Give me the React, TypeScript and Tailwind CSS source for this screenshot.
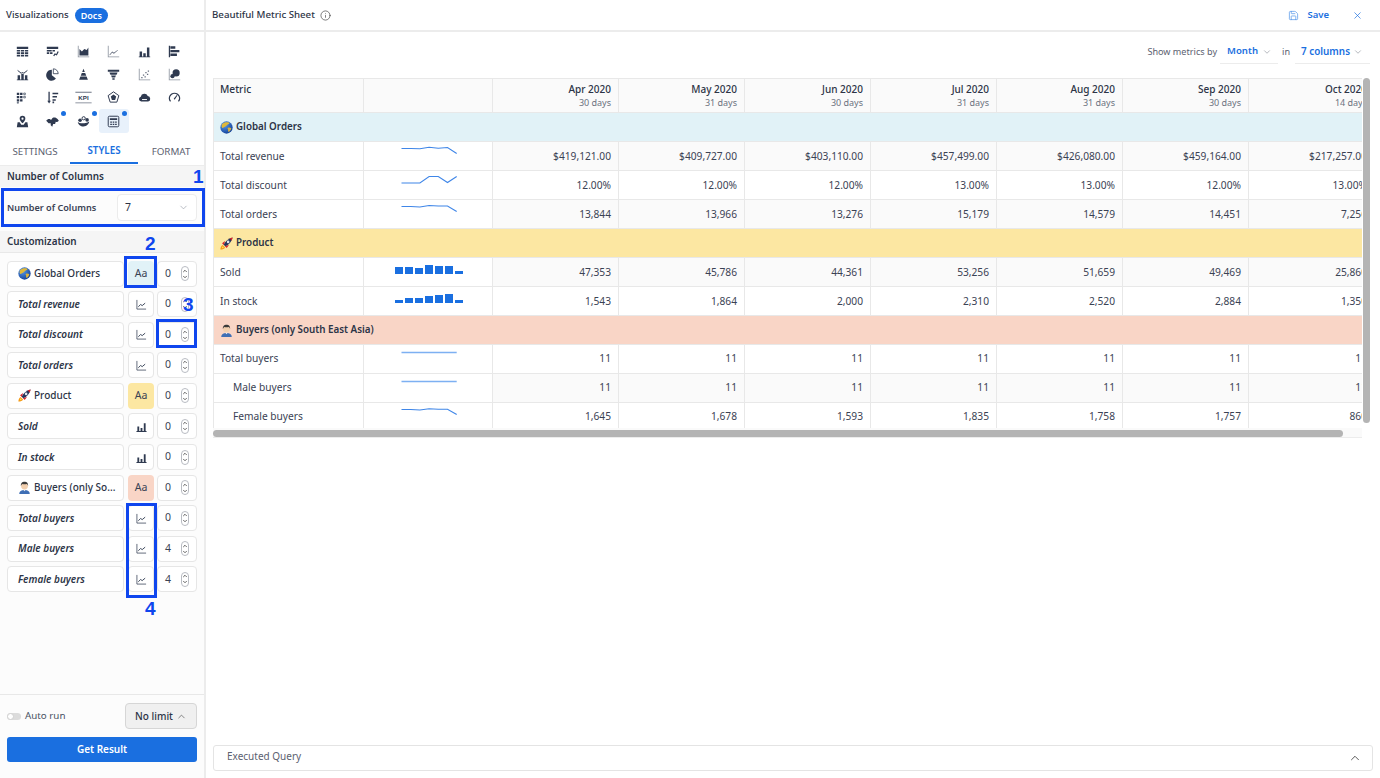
import React from "react";
import { ChevronDown, ChevronUp, X, Info, Save } from "lucide-react";

const INK = "#2f3a50";

function Globe({ s = 13 }: { s?: number }) {
  return (
    <svg width={s} height={s} viewBox="0 0 16 16" className="shrink-0">
      <defs>
        <radialGradient id="gl" cx="35%" cy="30%" r="80%">
          <stop offset="0" stopColor="#5a9be8" />
          <stop offset="1" stopColor="#0d3a94" />
        </radialGradient>
      </defs>
      <circle cx="8" cy="8" r="7.6" fill="url(#gl)" />
      <path d="M3 3.5c2-2 5-2.6 8-1.6 1 1 .4 2-1 2.2-1 .2-1 1.4-2.2 1.6-1.2.2-1 1.6-2.4 1.6-1 0-1 1.6-2.6 1.2C1.6 7.6 1.8 5 3 3.5z" fill="#e0b83a" />
      <path d="M9.5 8.5c1.4-.6 3.4-.4 4.4.3-.4 2.2-1.8 4-3.4 4.6-1-1-.2-2.2-.6-3-.3-.7-.8-1.4-.4-1.9z" fill="#d9b23c" />
    </svg>
  );
}

function Rocket({ s = 13 }: { s?: number }) {
  return (
    <svg width={s} height={s} viewBox="0 0 16 16" className="shrink-0">
      <path d="M.5 15.500c.1-2.800 1-4.800 2.700-5.700l3 3c-.9 1.700-2.900 2.600-5.700 2.700z" fill="#f59a14" />
      <path d="M2.300 13.700c.1-1.100.5-1.900 1.200-2.400l1.200 1.200c-.5.7-1.300 1.100-2.400 1.200z" fill="#fde25c" />
      <path d="M2.500 7.800 6.200 5 5 10z" fill="#d8232a" />
      <path d="M8.200 13.500 11 9.800 6 11z" fill="#d8232a" />
      <path d="M4.600 9.600C6.600 5 10 1.800 15.500.5c-1.300 5.500-4.500 8.900-9.100 10.900z" fill="#26345c" />
      <path d="M11.500 1.700c1.200.4 2.200 1.400 2.800 2.800.5-1.200.9-2.600 1.200-4-1.400.3-2.800.7-4 1.200z" fill="#d8232a" />
      <circle cx="10" cy="6" r="1.600" fill="#dfe6ee" />
    </svg>
  );
}

function Person({ s = 13 }: { s?: number }) {
  return (
    <svg width={s} height={s} viewBox="0 0 16 16" className="shrink-0">
      <path d="M1.500 16c0-3.400 2.400-5 6.500-5s6.500 1.600 6.500 5z" fill="#3f6fb5" />
      <path d="M6.400 10.600 8 12.600l1.600-2z" fill="#f3f4f6" />
      <circle cx="8" cy="6.200" r="4.200" fill="#f2cfae" />
      <path d="M3.600 6.200C3 2.600 5.400.8 8 .8s5 1.800 4.400 5.400c-.3-1.400-.9-2.200-1.600-2.600-1.600.6-3.600.6-5.400.2-.9.4-1.500 1.200-1.800 2.400z" fill="#3a3a3a" />
    </svg>
  );
}

const G = ({ children }: { children: React.ReactNode }) => (
  <svg width="13" height="13" viewBox="0 0 16 16" fill={INK}>
    {children}
  </svg>
);

const vizIcons: React.ReactNode[] = [
  <G key="a"><path d="M1 2h14v3H1zM1 6h4v2H1zM6 6h4v2H6zM11 6h4v2h-4zM1 9h4v2H1zM6 9h4v2H6zM11 9h4v2h-4zM1 12h4v2H1zM6 12h4v2H6zM11 12h4v2h-4z" /></G>,
  <G key="b"><path d="M1 2h14v3H1zM1 6h6v2H1zM8 6h3v2H8zM1 9h3v2H1zM5 9h3v2H5z" /><path d="M9.500 13.500 11 11l2 1 2-4" fill="none" stroke={INK} strokeWidth="1.500" /></G>,
  <G key="c"><path d="M1 1h1v13h13v1H1z" opacity=".55" /><path d="M3 13V5l3 3 3-3 3 1 2-3v10z" /></G>,
  <G key="d"><path d="M1 1h1v13h13v1H1z" opacity=".55" /><path d="M3.500 12.500 3 12l3.500-4 2 1.500L13 6l.5.6-5 4.200-2-1.500z" opacity=".85" /></G>,
  <G key="e"><path d="M2 8h3v6H2zM6.500 10h3v4h-3zM11 3h3v11h-3zM1 14.200h14v1H1z" /></G>,
  <G key="f"><path d="M1 1h1.600v14H1zM3 1.500h6v3H3zM3 6h11v3H3zM3 10.500h8v3H3z" /></G>,
  <G key="g"><path d="M2 9h3v5H2zM6.500 7h3v7h-3zM11 9h3v5h-3zM1 14.200h14v1H1z" /><path d="M2 3l4.500 3.500L8 5l1.500 1.500L14 3" fill="none" stroke={INK} strokeWidth="1.200" /></G>,
  <G key="h"><path d="M7.200 2.200v6.600l5 4.200A6.700 6.700 0 1 1 7.200 2.200z" /><path d="M9 1a6 6 0 0 1 6 6H9z" fill="none" stroke={INK} /></G>,
  <G key="i"><path d="M8 1 9.600 5H6.400zM5.900 6h4.200l1.300 3.400H4.600zM4.200 10.400h7.600l1.600 4.200H2.600z" /></G>,
  <G key="j"><path d="M1 2h14v2.600H1zM3 5.600h10l-1.200 2.600H4.200zM5 9.200h6l-1 2.400H6zM6.600 12.600h2.800v2H6.600z" /></G>,
  <G key="k"><path d="M1 1h1v13h13v1H1z" opacity=".55" /><path d="M4 11h1.600v1.600H4zM6 8h1.600v1.600H6zM8 10h1.600v1.600H8zM9 5h1.600v1.600H9zM11 7h1.600v1.600H11zM12 3h1.600v1.600H12z" opacity=".75" /></G>,
  <G key="l"><path d="M1 1h1v13h13v1H1z" opacity=".55" /><circle cx="10" cy="6" r="4.400" /><circle cx="5.500" cy="10" r="2.600" /></G>,
  <G key="m"><path d="M1 2h3v3H1zM5 2h3v3H5zM1 6h3v3H1zM5 6h3v3H5zM1 10h3v3H1zM5 10h3v3H5z" /><path d="M9.500 2.500h2v2h-2zM9.500 6.500h2v2h-2zM1.500 14h1.500v1H1.500z" fill="none" stroke={INK} strokeWidth=".8" /></G>,
  <G key="n"><path d="M3 1h1.600v11H6l-2.200 3.400L1.600 12H3zM8 2h7v2H8zM8 6h5.500v2H8zM8 10h4v2H8zM8 13h2v2H8z" /></G>,
  <svg key="o" width="19" height="13" viewBox="0 0 22 16" fill={INK}><path d="M1 1h20v1H1zM1 14h20v1H1z" opacity=".7" /><text x="11" y="11.500" fontSize="7.600" fontWeight="700" textAnchor="middle" fontFamily="'Liberation Sans',sans-serif">KPI</text></svg>,
  <G key="p"><path d="M8 1l6.600 4.700-2.500 8H3.900l-2.500-8z" fill="none" stroke={INK} strokeWidth="1.200" /><path d="M8 4.400l3.300 2.400-1.300 4.200H6l-1.300-4.200z" /></G>,
  <G key="q"><path d="M4 13a3 3 0 0 1-.6-5.900A4.500 4.500 0 0 1 12 6.300 3.400 3.400 0 0 1 12.400 13z" /><path d="M5 10.500h6" stroke="#fff" strokeWidth="1.200" /></G>,
  <G key="r"><path d="M8 2a7 7 0 0 0-5.500 11.300l1.200-1A5.400 5.400 0 1 1 12.300 12.300l1.200 1A7 7 0 0 0 8 2z" /><path d="M7.200 9.200 10.800 5l.8.600-3 4.600a1 1 0 0 1-1.400-1z" /></G>,
  <G key="s"><path fillRule="evenodd" d="M8 1a3.500 3.500 0 0 1 3.500 3.500C11.500 6.400 9.200 9 8 10.200 6.800 9 4.500 6.400 4.500 4.500A3.500 3.500 0 0 1 8 1zm0 2.200a1.300 1.300 0 1 0 0 2.600 1.300 1.300 0 0 0 0-2.600z" /><path d="M2 9h2.500l2 3h3l2-3H14l1 6H1z" /></G>,
  <G key="t"><path d="M.3 7c1-1.600 2.800-2.300 4.500-2l1.400 1.200L8 3.600c2.400-1 4.800-.3 6.200 1.400L15.800 7c-1 1.200-2.600 1.700-3.800 1.400L11.200 11H8.800l-1.100 3.400-1.900-1.800V10H3.200z" /></G>,
  <G key="u"><circle cx="3.800" cy="6.500" r="2.200" /><circle cx="8.200" cy="4" r="2" fill="none" stroke={INK} strokeWidth="1.200" /><circle cx="12.400" cy="6" r="2.200" /><path d="M1 8.500c1.400 1 2.600 1.600 4 1.600h4c1.800 0 4-.6 6-2-.2 3-3 5.900-7 5.900-3.600 0-6.600-2.300-7-5.500z" /></G>,
  <G key="v"><rect x="1.500" y="1.500" width="13" height="13" rx="1.600" fill="none" stroke={INK} strokeWidth="1.200" /><path d="M3.500 4h9v2h-9zM4 8h2v1.500H4zM7 8h2v1.500H7zM10 8h2v1.500h-2zM4 10.700h2v1.500H4zM7 10.700h2v1.500H7zM10 10.700h2v1.500h-2z" /></G>,
];

const LineIcon = () => (
  <svg width="11" height="11" viewBox="0 0 12 12" fill="none" stroke={INK} strokeWidth="1">
    <path d="M1 1v10h10" opacity=".8" />
    <path d="M2.500 8.500 5 6l1.800 1.200L10 4.500" />
  </svg>
);

const BarIcon = () => (
  <svg width="11" height="11" viewBox="0 0 12 12" fill={INK}>
    <path d="M1.500 6h2v5h-2zM5 7.500h2V11H5zM8.500 2.500h2V11h-2zM.500 11h11v.900H.500z" />
  </svg>
);

const Stepper = () => (
  <span className="flex h-[15px] w-[8px] flex-col items-center justify-center rounded-full border border-[#b9bcc3] bg-white">
    <ChevronUp size={6} strokeWidth={3} color="#333" />
    <ChevronDown size={6} strokeWidth={3} color="#333" />
  </span>
);

type SideRow = { label: string; kind: "group" | "line" | "bar"; v: string; icon?: React.ReactNode; color?: string };

const sideRows: SideRow[] = [
  { label: "Global Orders", kind: "group", v: "0", icon: <Globe />, color: "bg-[#e1f2f7]" },
  { label: "Total revenue", kind: "line", v: "0" },
  { label: "Total discount", kind: "line", v: "0" },
  { label: "Total orders", kind: "line", v: "0" },
  { label: "Product", kind: "group", v: "0", icon: <Rocket />, color: "bg-[#fce7a2]" },
  { label: "Sold", kind: "bar", v: "0" },
  { label: "In stock", kind: "bar", v: "0" },
  { label: "Buyers (only So...", kind: "group", v: "0", icon: <Person />, color: "bg-[#f9d5c6]" },
  { label: "Total buyers", kind: "line", v: "0" },
  { label: "Male buyers", kind: "line", v: "4" },
  { label: "Female buyers", kind: "line", v: "4" },
];

function Sidebar() {
  return (
    <aside className="flex h-full w-[206px] shrink-0 flex-col border-r-2 border-[#ececec] bg-[#fcfcfc]">
      <div className="flex h-[32px] shrink-0 items-center gap-[6px] border-b-2 border-[#ececec] bg-white pl-[6px] pt-[1px]">
        <span className="text-[9.600px] font-medium text-[#2c3446]">Visualizations</span>
        <span className="flex h-[15px] items-center rounded-full bg-[#1a6fe0] px-[6px] text-[9px] font-semibold text-white">Docs</span>
      </div>
      <div className="grid h-[109px] shrink-0 grid-cols-[repeat(6,30.500px)] grid-rows-[repeat(4,23.300px)] content-start bg-white pl-[7px] pt-[7.500px]">
        {vizIcons.map((ic, i) => (
          <div key={i} className={`relative flex items-center justify-center rounded-[3px] ${i === 21 ? "bg-[#e8f1fb]" : ""}`}>
            {ic}
            {i >= 19 && <span className="absolute right-[2px] top-[2px] h-[5px] w-[5px] rounded-full bg-[#1a6fe0]" />}
          </div>
        ))}
      </div>
      <div className="flex h-[24px] shrink-0 bg-white pb-[1px] text-[9.800px] text-[#5b6170]">
        <div className="flex w-[70px] items-center justify-center">SETTINGS</div>
        <div className="flex w-[68px] items-center justify-center border-b-2 border-[#1a6fe0] font-semibold text-[#1a6fe0]">STYLES</div>
        <div className="flex w-[66px] items-center justify-center">FORMAT</div>
      </div>
      <div className="flex h-[22px] shrink-0 items-center border-t border-[#ececec] bg-[#f5f5f5] pl-[7px] text-[9.900px] font-semibold text-[#2c3446]">Number of Columns</div>
      <div className="flex h-[41px] shrink-0 items-center justify-between pl-[7px] pr-[7px]">
        <span className="pt-[1px] text-[9.100px] font-semibold text-[#3a4254]">Number of Columns</span>
        <div className="flex h-[27px] w-[80px] items-center justify-between rounded-[4px] border border-[#ececec] bg-white pl-[7px] pr-[7px] text-[10.500px] text-[#2c3446]">
          7
          <ChevronDown size={11} color="#9aa0aa" strokeWidth={1.500} />
        </div>
      </div>
      <div className="mt-[3px] flex h-[22px] shrink-0 items-center border-b border-[#e8e8e8] bg-[#f5f5f5] pl-[7px] text-[9.900px] font-semibold text-[#2c3446]">Customization</div>
      <div className="flex flex-col gap-[4.600px] pl-[7px] pr-[7px] pt-[7.500px]">
        {sideRows.map((r) => (
          <div key={r.label} className="flex h-[26px] items-center">
            <div className={`flex h-full w-[117px] items-center overflow-hidden rounded-[4px] border border-[#e6e6e6] bg-white pl-[10px] ${r.kind === "group" ? "gap-[3px] text-[10px] font-medium text-[#2c3446]" : "text-[10px] font-semibold italic text-[#2c3446]"}`}>
              {r.icon}
              <span className="whitespace-nowrap">{r.label}</span>
            </div>
            <div className={`ml-[4px] flex h-full w-[26px] items-center justify-center rounded-[4px] ${r.kind === "group" ? r.color : "border border-[#e6e6e6] bg-white"}`}>
              {r.kind === "group" ? <span className="text-[10.500px] text-[#3a4254]">Aa</span> : r.kind === "bar" ? <BarIcon /> : <LineIcon />}
            </div>
            <div className="ml-[3px] flex h-full w-[40px] items-center justify-between rounded-[4px] border border-[#e6e6e6] bg-white pl-[7px] pr-[7px] text-[10.500px] text-[#3a4254]">
              {r.v}
              <Stepper />
            </div>
          </div>
        ))}
      </div>
      <div className="flex-1" />
      <div className="flex h-[84px] shrink-0 flex-col border-t border-[#e8e8e8] px-[7px] pt-[8px]">
        <div className="flex h-[26px] items-center justify-between">
          <div className="flex items-center gap-[4px]">
            <span className="flex h-[7px] w-[14px] items-center rounded-full bg-[#dcdcdc]">
              <span className="h-[7px] w-[7px] rounded-full border border-[#d0d0d0] bg-white" />
            </span>
            <span className="text-[9.800px] text-[#4a5263]">Auto run</span>
          </div>
          <div className="flex h-[26px] w-[72px] items-center justify-center gap-[3px] rounded-[4px] border border-[#d6d6d6] bg-[#f0f0f0] text-[10px] font-medium text-[#2c3446]">
            No limit
            <ChevronUp size={11} strokeWidth={1.500} color="#555" />
          </div>
        </div>
        <div className="mt-[8px] flex h-[25px] w-[190px] items-center justify-center rounded-[3px] bg-[#1a6fe0] text-[10px] font-semibold text-white">Get Result</div>
      </div>
    </aside>
  );
}

const months = [
  ["Apr 2020", "30 days"],
  ["May 2020", "31 days"],
  ["Jun 2020", "30 days"],
  ["Jul 2020", "31 days"],
  ["Aug 2020", "31 days"],
  ["Sep 2020", "30 days"],
  ["Oct 2020", "14 days"],
];

const xs = [0, 9.200, 18.400, 27.600, 36.800, 46, 55.200];

function Spark({ ys, flat }: { ys: number[]; flat?: boolean }) {
  return (
    <svg width="57" height="14" viewBox="0 0 57 14" className="absolute left-[37px] top-[2px]">
      <polyline
        points={ys.map((y, i) => `${xs[i] + 0.500},${y}`).join(" ")}
        fill="none"
        stroke={flat ? "#7db0f2" : "#3f86e8"}
        strokeWidth={flat ? 1.400 : 1.100}
      />
    </svg>
  );
}

function Bars({ hs }: { hs: number[] }) {
  return (
    <div className="absolute left-[31px] top-[6px] flex h-[10px] items-end gap-[2px]">
      {hs.map((h, i) => (
        <div key={i} className="w-[8px] bg-[#1a6fe0]" style={{ height: h }} />
      ))}
    </div>
  );
}

type Row =
  | { t: "group"; label: string; icon: React.ReactNode; bg: string; low?: boolean }
  | { t: "data"; label: string; indent?: boolean; chart: React.ReactNode; vals: string[]; shade?: boolean; low?: boolean };

const rows: Row[] = [
  { t: "group", low: true, label: "Global Orders", icon: <Globe />, bg: "bg-[#e1f2f7]" },
  { t: "data", low: true, label: "Total revenue", shade: true, chart: <Spark ys={[4.500, 4.500, 4.800, 3.300, 4.200, 3.500, 9.500]} />, vals: ["$419,121.00", "$409,727.00", "$403,110.00", "$457,499.00", "$426,080.00", "$459,164.00", "$217,257.00"] },
  { t: "data", low: true, label: "Total discount", chart: <Spark ys={[10, 10, 10, 3.500, 3.500, 9.500, 3.500]} />, vals: ["12.00%", "12.00%", "12.00%", "13.00%", "13.00%", "12.00%", "13.00%"] },
  { t: "data", low: true, label: "Total orders", shade: true, chart: <Spark ys={[4.500, 4.500, 5, 3.500, 4, 4, 9.500]} />, vals: ["13,844", "13,966", "13,276", "15,179", "14,579", "14,451", "7,256"] },
  { t: "group", low: true, label: "Product", icon: <Rocket />, bg: "bg-[#fce7a2]" },
  { t: "data", low: true, label: "Sold", shade: true, chart: <Bars hs={[7.500, 7.500, 6.500, 9.500, 8.500, 8.500, 3.500]} />, vals: ["47,353", "45,786", "44,361", "53,256", "51,659", "49,469", "25,860"] },
  { t: "data", low: true, label: "In stock", chart: <Bars hs={[3.500, 5, 5, 7, 8, 9.500, 3.500]} />, vals: ["1,543", "1,864", "2,000", "2,310", "2,520", "2,884", "1,350"] },
  { t: "group", label: "Buyers (only South East Asia)", icon: <Person />, bg: "bg-[#f9d5c6]" },
  { t: "data", label: "Total buyers", chart: <Spark flat ys={[5.500, 5.500, 5.500, 5.500, 5.500, 5.500, 5.500]} />, vals: ["11", "11", "11", "11", "11", "11", "11"] },
  { t: "data", label: "Male buyers", indent: true, shade: true, chart: <Spark flat ys={[5.500, 5.500, 5.500, 5.500, 5.500, 5.500, 5.500]} />, vals: ["11", "11", "11", "11", "11", "11", "11"] },
  { t: "data", label: "Female buyers", indent: true, chart: <Spark ys={[4.500, 4.500, 5, 3.800, 4.200, 4.200, 9.500]} />, vals: ["1,645", "1,678", "1,593", "1,835", "1,758", "1,757", "860"] },
];

function MetricTable() {
  return (
    <div className="relative mx-[7px] h-[361px] shrink-0">
      <div className="h-[350px] w-[1149px] overflow-hidden">
        <table className="w-[1161px] table-fixed border-collapse text-[10.200px] text-[#3a4254]">
          <colgroup>
            <col className="w-[150px]" />
            <col className="w-[129px]" />
            {months.map((m) => (
              <col key={m[0]} className="w-[126px]" />
            ))}
          </colgroup>
          <thead>
            <tr className="h-[34px] bg-[#fafafa]">
              <th className="border border-[#e8e8e8] pl-[6px] pt-[3px] text-left align-top text-[10.200px] font-medium text-[#2c3446]">Metric</th>
              <th className="border border-[#e8e8e8]" />
              {months.map((m) => (
                <th key={m[0]} className="whitespace-nowrap border border-[#e8e8e8] pr-[7px] pt-[4px] text-right align-top font-normal leading-[13px]">
                  <div className="text-[10px] font-medium text-[#2c3446]">{m[0]}</div>
                  <div className="text-[9px] text-[#6b7280]">{m[1]}</div>
                </th>
              ))}
            </tr>
          </thead>
          <tbody>
            {rows.map((r) =>
              r.t === "group" ? (
                <tr key={r.label} className={`h-[29px] ${r.bg}`}>
                  <td colSpan={9} className={`border border-[#e8e8e8] pl-[6px] ${r.low ? "pt-[1px]" : ""}`}>
                    <div className="flex items-center gap-[3px] text-[9.800px] font-semibold text-[#2c3446]">
                      {r.icon}
                      {r.label}
                    </div>
                  </td>
                </tr>
              ) : (
                <tr key={r.label} className="h-[29px]">
                  <td className={`border border-[#e8e8e8] ${r.indent ? "pl-[19px]" : "pl-[6px]"} ${r.low ? "pt-[2px]" : ""}`}>{r.label}</td>
                  <td className="relative border border-[#e8e8e8]">{r.chart}</td>
                  {r.vals.map((v, i) => (
                    <td key={i} className={`whitespace-nowrap border border-[#e8e8e8] pr-[7px] text-right ${r.shade ? "bg-[#fafafa]" : ""} ${r.low ? "pt-[2px]" : ""}`}>{v}</td>
                  ))}
                </tr>
              ),
            )}
          </tbody>
        </table>
      </div>
      <div className="absolute left-0 top-[350px] h-[10px] w-[1149px] border-b border-[#ececec] bg-[#fafafa]" />
      <div className="absolute left-0 top-[352px] h-[7px] w-[1130px] rounded-full bg-[#b4b4b4]" />
      <div className="absolute left-[1150px] top-0 h-[345px] w-[7px] rounded-full bg-[#b4b4b4]" />
    </div>
  );
}

function Main() {
  return (
    <main className="flex h-full min-w-0 flex-1 flex-col bg-white">
      <div className="flex h-[32px] shrink-0 items-center border-b-2 border-[#ececec] pl-[6px] pr-[17px] pt-[1px]">
        <span className="text-[9.700px] font-medium text-[#2c3446]">Beautiful Metric Sheet</span>
        <Info size={11} strokeWidth={1.500} color="#444" className="ml-[5px]" />
        <div className="flex-1" />
        <Save size={11} strokeWidth={1.500} color="#4a90e8" />
        <span className="ml-[8px] text-[9.500px] font-semibold text-[#1a6fe0]">Save</span>
        <X size={11} strokeWidth={1.500} color="#1a6fe0" className="ml-[23px]" />
      </div>
      <div className="flex h-[46px] shrink-0 items-start justify-end pr-[10px] pt-[8px]">
        <span className="mr-[3px] flex h-[23px] items-center text-[9.100px] text-[#5b6170]">Show metrics by</span>
        <div className="mr-[4px] flex h-[24px] w-[58px] items-center gap-[4px] border-b border-[#ececec] pl-[7px] text-[9.600px] font-semibold text-[#1a6fe0]">
          Month
          <ChevronDown size={10} color="#8a8f99" strokeWidth={1.500} />
        </div>
        <span className="flex h-[23px] items-center text-[9.100px] text-[#5b6170]">in</span>
        <div className="ml-[5px] flex h-[24px] w-[75px] items-center gap-[3px] border-b border-[#ececec] pl-[6px] text-[9.900px] font-semibold text-[#1a6fe0]">
          7 columns
          <ChevronDown size={10} color="#8a8f99" strokeWidth={1.500} />
        </div>
      </div>
      <MetricTable />
      <div className="flex-1" />
      <div className="mx-[7px] mb-[7px] flex h-[26px] shrink-0 items-center justify-between rounded-[3px] border border-[#e4e4e4] pl-[13px] pr-[10px]">
        <span className="pb-[3px] text-[10px] text-[#5b6170]">Executed Query</span>
        <ChevronUp size={14} strokeWidth={1.500} color="#444" />
      </div>
    </main>
  );
}

const boxes = [
  "left-[1px] top-[188px] h-[39px] w-[204px]",
  "left-[124px] top-[256px] h-[32px] w-[33px]",
  "left-[156px] top-[319px] h-[29px] w-[41px]",
  "left-[126px] top-[503px] h-[95px] w-[31px]",
];

const marks: [string, string][] = [
  ["1", "left-[193px] top-[167px]"],
  ["2", "left-[145px] top-[234px]"],
  ["3", "left-[183px] top-[295px]"],
  ["4", "left-[145px] top-[599px]"],
];

export default function App() {
  return (
    <div className="relative flex h-[778px] w-[1380px] overflow-hidden bg-white font-['Noto_Sans',sans-serif]">
      <Sidebar />
      <Main />
      {boxes.map((b) => (
        <div key={b} className={`absolute border-[3px] border-[#0f46ee] ${b}`} />
      ))}
      {marks.map(([t, c]) => (
        <span key={t} className={`absolute font-['Liberation_Sans',sans-serif] text-[19px] font-bold leading-[20px] text-[#0f46ee] ${c}`}>{t}</span>
      ))}
    </div>
  );
}
